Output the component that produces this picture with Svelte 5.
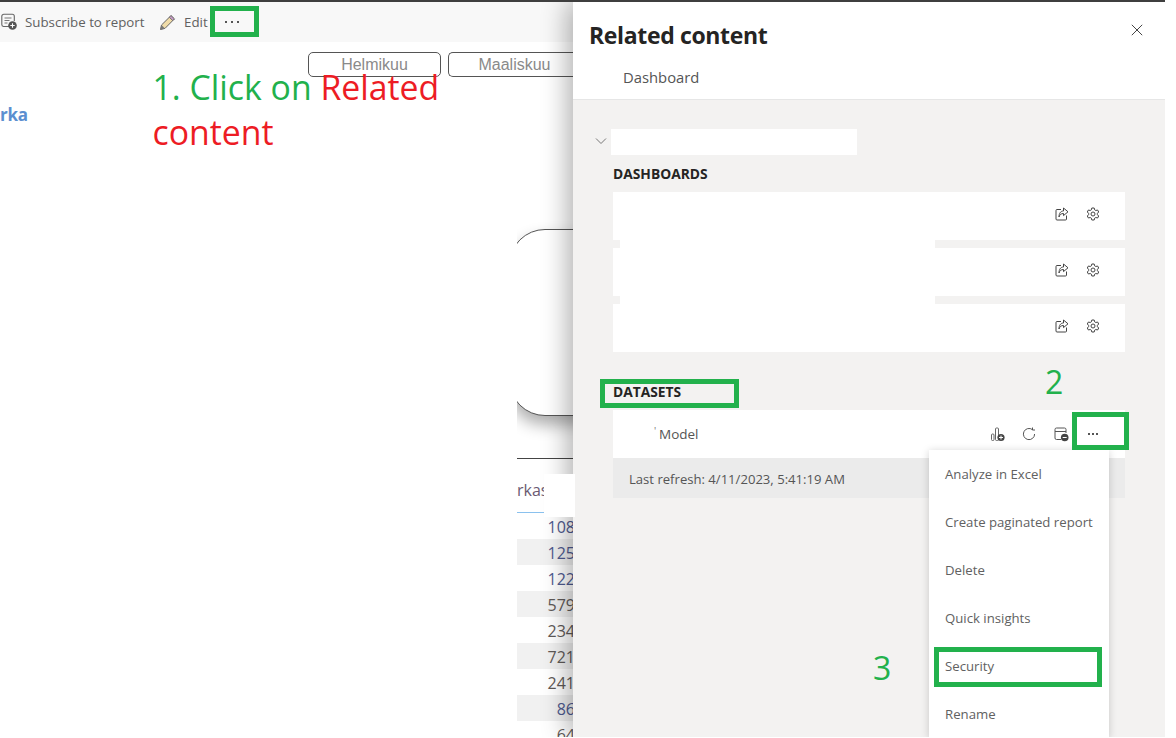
<script>
  const rows = [
    { v: '108', c: 'blue' }, { v: '125', c: 'blue', alt: true }, { v: '122', c: 'blue' },
    { v: '579', c: 'mix', alt: true }, { v: '234', c: 'mix' }, { v: '721', c: 'mix', alt: true },
    { v: '241', c: 'mix' }, { v: '86', c: 'blue', alt: true }, { v: '64', c: 'mix' }
  ];
  const menu = ['Analyze in Excel', 'Create paginated report', 'Delete', 'Quick insights', 'Security', 'Rename'];
</script>

<div class="page">
  <div class="topline"></div>
  <div class="main">
    <section class="report">
      <div class="toolbar">
        <svg class="sub" width="18" height="18" viewBox="0 0 18 18" fill="none">
          <path d="M10 13.5H3.5a2 2 0 0 1-1.7-2V3.2a2 2 0 0 1 2-2h8.5a2 2 0 0 1 2 2V8" stroke="#666" stroke-width="1.1"/>
          <path d="M4.5 5h7M4.5 7.5h5M4.5 10h3" stroke="#777" stroke-width="1"/>
          <circle cx="12.5" cy="12.5" r="4.3" fill="#555"/>
          <path d="M12.5 10.3v4.4M10.3 12.5h4.4" stroke="#fff" stroke-width="1.1"/>
        </svg>
        <span class="tool-text">Subscribe to report</span>
        <svg class="pencil" width="17" height="17" viewBox="0 0 17 17">
          <path d="M1.5 15.5l1-4.5L12 1.6l3.4 3.3L6 14.4z" fill="#f0dca8" stroke="#666" stroke-width="1"/>
          <path d="M12 1.6l3.4 3.3-1.7 1.7-3.4-3.3z" fill="#c49ac4" stroke="#666" stroke-width=".8"/>
          <path d="M1.5 15.5l1-4.5 3.500 3.400z" fill="#777"/>
        </svg>
        <span class="tool-text edit">Edit</span>
        <span class="tool-more"><i></i><i></i><i></i></span>
      </div>
      <div class="canvas">
        <div class="slicer s1">Helmikuu</div>
        <div class="slicer s2">Maaliskuu</div>
        <div class="kpi-title">rka</div>
        <div class="card-shape"></div>
        <div class="rule"></div>
        <div class="table">
          <div class="thead"><span class="th">rkas</span></div>
          {#each rows as r}
            <div class="trow" class:alt={r.alt}><span class={r.c}>{r.v}</span></div>
          {/each}
        </div>
      </div>
    </section>

    <aside class="panel">
      <header class="head">
        <h1>Related content</h1>
        <button class="close" aria-label="Close">
          <svg width="12" height="12" viewBox="0 0 12 12"><path d="M.8.8l10.400 10.400M11.200.8L.8 11.200" stroke="#444" stroke-width="1"/></svg>
        </button>
        <div class="tab">Dashboard</div>
      </header>
      <div class="body">
        <div class="ws">
          <svg class="chev" width="12" height="8" viewBox="0 0 12 8"><path d="M1 1.500l5 5 5-5" fill="none" stroke="#777" stroke-width="1"/></svg>
          <div class="ws-name"></div>
        </div>
        <h2 class="dash-title">DASHBOARDS</h2>
        <div class="cards">
          {#each [0, 1, 2] as i}
            <div class="card">
              {#if i < 2}<span class="redact"></span>{/if}
              <svg class="ic share" width="14" height="14" viewBox="0 0 14 14" fill="none" stroke="#444" stroke-width="1">
                <path d="M6 2.500H2a1 1 0 0 0-1 1v8.500a1 1 0 0 0 1 1h8.500a1 1 0 0 0 1-1V8.500"/>
                <path d="M8.500 1l4.500 3.800-4.500 3.800V6.500C6 6.500 4.800 7.600 4 10c0-3.500 1.500-6 4.500-6z"/>
              </svg>
              <svg class="ic gear" width="14" height="14" viewBox="0 0 14 14" fill="none" stroke="#444" stroke-width="1">
                <path d="M5.800 1h2.400l.4 1.800 1.200.7 1.800-.5 1.100 2-1.300 1.300v1.400l1.300 1.300-1.100 2-1.800-.5-1.200.7L8.200 13H5.800l-.4-1.800-1.200-.7-1.800.5-1.100-2 1.300-1.300V6.300L1.300 5l1.100-2 1.800.5 1.200-.7z"/>
                <circle cx="7" cy="7" r="2"/>
              </svg>
            </div>
          {/each}
        </div>
        <h2 class="data-title">DATASETS</h2>
        <div class="dataset">
          <div class="ds-row">
            <span class="ds-tick">'</span><span class="ds-name">Model</span>
            <svg class="dsi i1" width="15" height="16" viewBox="0 0 15 16" fill="none" stroke="#666" stroke-width="1">
              <rect x="1.500" y="8" width="2.500" height="6.500" rx="1"/><rect x="5.500" y="2" width="3" height="12.500" rx="1"/>
              <circle cx="11" cy="11.500" r="3.600" fill="#444" stroke="none"/>
              <path d="M11 9.500v4M9 11.500h4" stroke="#fff"/>
            </svg>
            <svg class="dsi i2" width="14" height="14" viewBox="0 0 14 14" fill="none" stroke="#555" stroke-width="1">
              <path d="M10.400 2.600A5.600 5.600 0 1 0 12.600 7"/><path d="M10.500 .5v2.500H13"/>
            </svg>
            <svg class="dsi i3" width="15" height="15" viewBox="0 0 15 15" fill="none" stroke="#555" stroke-width="1">
              <path d="M7 12.500H2.500a1.500 1.500 0 0 1-1.500-1.500V2.500A1.500 1.500 0 0 1 2.500 1h8A1.500 1.500 0 0 1 12 2.500V6M1 4.500h11"/>
              <circle cx="10.700" cy="10.500" r="3.800" fill="#444" stroke="none"/>
              <path d="M8.700 10.500h4" stroke="#fff"/>
            </svg>
            <span class="ds-more"><i></i><i></i><i></i></span>
          </div>
          <div class="refresh">Last refresh: 4/11/2023, 5:41:19 AM</div>
        </div>
      </div>
    </aside>
  </div>

  <div class="patch"></div>

  <div class="menu">
    {#each menu as m}<div class="item">{m}</div>{/each}
  </div>

  <div class="note n1"><span class="g">1. Click on&nbsp;</span><span class="r">Related<br />content</span></div>
  <div class="num n2">2</div>
  <div class="num n3">3</div>
  <div class="box b1"></div>
  <div class="box b2"></div>
  <div class="box b3"></div>
  <div class="box b4"></div>
</div>

<style>
  :global(body) { margin: 0; background: #fff; }
  .page {
    position: relative; width: 1165px; height: 737px; overflow: hidden;
    display: flex; flex-direction: column; background: #fff;
    font-family: "Open Sans", "Noto Sans", sans-serif; color: #252423;
  }
  .topline { height: 2px; background: #3f3f3f; flex: none; }
  .main { flex: 1; display: flex; min-height: 0; }
  .report { width: 573px; flex: none; display: flex; flex-direction: column; overflow: hidden; }
  .toolbar { height: 40px; flex: none; background: #f8f8f8; display: flex; align-items: center; }
  .sub { flex: none; }
  .tool-text { font-size: 13.3px; color: #616161; white-space: nowrap; }
  .sub + .tool-text { margin-left: 7px; width: 119px; }
  .pencil { margin-left: 15px; flex: none; }
  .edit { margin-left: 8px; }
  .tool-more { display: flex; gap: 4px; margin-left: 17px; }
  .tool-more i { width: 2px; height: 2px; background: #555; display: block; }
  .canvas { position: relative; flex: 1; min-height: 0; }
  .slicer {
    position: absolute; top: 10px; height: 23px; border: 1px solid #555; border-radius: 5px;
    display: flex; align-items: center; justify-content: center;
    font: 16px "Liberation Sans", sans-serif; color: #8a8a8a; background: #fff;
  }
  .s1 { left: 308px; width: 131px; }
  .s2 { left: 448px; width: 131px; border-right: 0; border-radius: 5px 0 0 5px; padding-right: 10px; }
  .kpi-title { position: absolute; left: 0; top: 61px; font-size: 17px; font-weight: 700; color: #5b8fd0; letter-spacing: -.3px; }
  .card-shape {
    position: absolute; left: 509px; top: 187px; width: 128px; height: 187px; box-sizing: border-box;
    border: 1px solid #555; border-radius: 36px; background: #fff;
    box-shadow: 0 9px 16px rgba(0, 0, 0, .32); clip-path: inset(-40px 0 -40px 8px);
  }
  .rule { position: absolute; left: 517px; top: 416px; width: 56px; height: 1px; background: #444; }
  .table { position: absolute; left: 517px; top: 432px; width: 58px; }
  .thead { position: relative; height: 39px; width: 27px; border-bottom: 1px solid #8ac1ee; box-sizing: border-box; overflow: hidden; }
  .th { position: absolute; left: 0; top: 5px; font-size: 16px; color: #6b5a72; white-space: nowrap; }
  .trow { height: 26px; text-align: right; font-size: 16px; line-height: 28px; width: 58px; box-sizing: border-box; }
  .trow.alt { background: #f1f1f1; }
  .blue { color: #4f5a8f; }
  .mix { color: #5f5a58; }
  .panel {
    width: 592px; flex: none; position: relative; z-index: 2; background: #f3f2f1;
    display: flex; flex-direction: column; box-shadow: -6px 0 24px rgba(0, 0, 0, .3);
    clip-path: inset(0 0 0 -60px);
  }
  .head { background: #fff; height: 97px; flex: none; position: relative; border-bottom: 1px solid #e6e6e6; }
  h1 { margin: 0; padding: 18px 0 0 16px; font-size: 23px; font-weight: 700; line-height: 30px; color: #252423; letter-spacing: -.35px; }
  .close { position: absolute; right: 22px; top: 22px; padding: 0; border: 0; background: none; display: block; line-height: 0; }
  .tab { margin: 17px 0 0 50px; font-size: 14.8px; line-height: 20px; color: #555; }
  .body { flex: 1; padding: 29px 40px 0 40px; min-height: 0; }
  .ws { position: relative; height: 26px; }
  .chev { position: absolute; left: -18px; top: 8px; }
  .ws-name { width: 246px; height: 26px; margin-left: -2px; background: #fff; }
  h2 { margin: 0; font-size: 13.8px; font-weight: 700; line-height: 18px; color: #252423; }
  .dash-title { margin-top: 10px; }
  .cards { margin-top: 9px; display: flex; flex-direction: column; gap: 8px; }
  .card { height: 48px; background: #fff; position: relative; display: flex; align-items: center; justify-content: flex-end; }
  .redact { position: absolute; left: 7px; top: 48px; width: 315px; height: 8px; background: #fff; }
  .ic { margin-bottom: 4px; }
  .share { margin-right: 17px; }
  .gear { margin-right: 25px; }
  .data-title { margin-top: 31px; }
  .dataset { margin-top: 9px; }
  .ds-row { height: 48px; background: #fff; display: flex; align-items: center; }
  .ds-tick { margin-left: 41px; font-size: 10px; color: #777; width: 5px; position: relative; top: -3px; }
  .ds-name { font-size: 13.5px; color: #555; flex: 1; }
  .dsi { flex: none; }
  .i1 { margin-right: 17px; }
  .i2 { margin-right: 18px; }
  .i3 { margin-right: 19px; }
  .ds-more { display: flex; gap: 2px; margin-right: 27px; }
  .ds-more i { width: 2px; height: 2px; background: #555; display: block; }
  .refresh { height: 40px; background: #ebebeb; font-size: 13.1px; line-height: 42px; padding-left: 16px; color: #555; }
  .patch { position: absolute; left: 544px; top: 474px; width: 31px; height: 43px; background: #fff; z-index: 3; }
  .menu {
    position: absolute; left: 929px; top: 450px; width: 180px; z-index: 3; background: #fff;
    box-shadow: 0 1px 8px rgba(0, 0, 0, .18);
  }
  .item { height: 48px; line-height: 48px; padding-left: 16px; font-size: 13.2px; color: #616161; white-space: nowrap; }
  .note { position: absolute; left: 152.5px; top: 65px; z-index: 3; font-size: 33.8px; line-height: 45px; white-space: nowrap; }
  .g { color: #22b14c; } .r { color: #ed1c24; }
  .num { position: absolute; z-index: 3; font-size: 32px; line-height: 40px; color: #22b14c; }
  .n2 { left: 1045px; top: 362px; }
  .n3 { left: 873px; top: 648px; }
  .box { position: absolute; z-index: 4; border: 5px solid #22b14c; box-sizing: border-box; }
  .b1 { left: 210px; top: 6px; width: 49px; height: 31px; }
  .b2 { left: 600px; top: 379px; width: 139px; height: 29px; }
  .b3 { left: 1072px; top: 412px; width: 57px; height: 38px; }
  .b4 { left: 934px; top: 647px; width: 168px; height: 40px; }
</style>
